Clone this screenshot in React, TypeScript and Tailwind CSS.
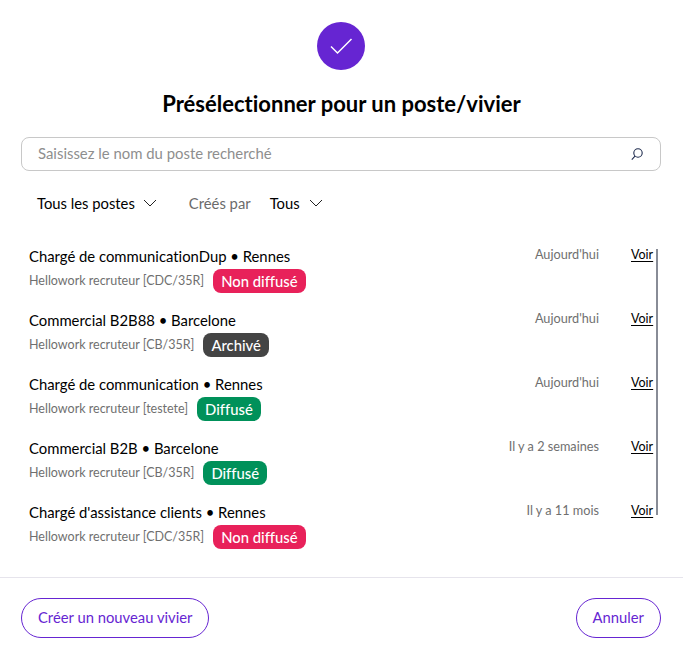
const font = "[font-family:Lato,'Noto_Sans',sans-serif] [font-variant-ligatures:none]";

type Row = { title: string; sub: string; badge: string; color: string; date: string };

const rows: Row[] = [
  { title: "Chargé de communicationDup • Rennes", sub: "Hellowork recruteur [CDC/35R]", badge: "Non diffusé", color: "bg-[#e8215a]", date: "Aujourd'hui" },
  { title: "Commercial B2B88 • Barcelone", sub: "Hellowork recruteur [CB/35R]", badge: "Archivé", color: "bg-[#444444]", date: "Aujourd'hui" },
  { title: "Chargé de communication • Rennes", sub: "Hellowork recruteur [testete]", badge: "Diffusé", color: "bg-[#00915a]", date: "Aujourd'hui" },
  { title: "Commercial B2B • Barcelone", sub: "Hellowork recruteur [CB/35R]", badge: "Diffusé", color: "bg-[#00915a]", date: "Il y a 2 semaines" },
  { title: "Chargé d'assistance clients • Rennes", sub: "Hellowork recruteur [CDC/35R]", badge: "Non diffusé", color: "bg-[#e8215a]", date: "Il y a 11 mois" },
];

function Chevron() {
  return (
    <svg width="14" height="8" viewBox="0 0 14 8" fill="none" stroke="#222" strokeWidth="1">
      <path d="M1 1l6 6 6-6" />
    </svg>
  );
}

export default function App() {
  return (
    <div className={`${font} w-[683px] h-[660px] bg-white flex flex-col text-black overflow-hidden`}>
      <div className="flex justify-center pt-[22px] pr-px">
        <div className="w-12 h-12 rounded-full bg-[#6625d2] flex items-center justify-center">
          <svg width="24" height="18" viewBox="0 0 24 18" fill="none" stroke="white" strokeWidth="1.5">
            <path d="M2 9.5l6.5 6.5L22.5 2" />
          </svg>
        </div>
      </div>
      <h1 className="mt-[20px] text-center text-[22px] leading-[28px] font-bold">Présélectionner pour un poste/vivier</h1>
      <div className="ml-[21px] mr-[22px] mt-[19px] h-[34px] rounded-lg border border-[#c8c8c8] flex items-center justify-between pl-4 pr-[16px]">
        <span className="text-[14.9px] leading-[20px] -mt-[2px] text-[#8e8e8e]">Saisissez le nom du poste recherché</span>
        <svg width="14" height="14" viewBox="0 0 14 14" fill="none" stroke="#1d2a4d" strokeWidth="1.1">
          <circle cx="8" cy="6" r="4.2" />
          <path d="M5 9.2L1.8 12.6" />
        </svg>
      </div>
      <div className="mt-[21px] ml-[37px] flex items-center text-[14.8px] leading-[22px]">
        <span>Tous les postes</span>
        <span className="ml-[8px]"><Chevron /></span>
        <span className="ml-[32px] text-[#6b6b6b]">Créés par</span>
        <span className="ml-[19px]">Tous</span>
        <span className="ml-[9px]"><Chevron /></span>
      </div>
      <div className="relative mt-[32px] ml-[29px] mr-[30px] flex flex-col gap-[14px]">
        {rows.map((r) => (
          <div key={r.title} className="h-[50px] flex justify-between">
            <div className="flex flex-col">
              <div className="text-[14.85px] leading-[20px]">{r.title}</div>
              <div className="mt-[3px] flex items-center gap-[9px]">
                <span className="text-[12.5px] text-[#6f6f6f]">{r.sub}</span>
                <span className={`${r.color} h-6 px-[8px] rounded-lg text-white text-[14.8px] font-medium flex items-center`}>{r.badge}</span>
              </div>
            </div>
            <div className="flex items-start">
              <span className="text-[12.7px] leading-[16px] text-[#6f6f6f]">{r.date}</span>
              <span className="ml-8 w-[22px] pt-px text-[12.5px] leading-[16px] underline underline-offset-2">Voir</span>
            </div>
          </div>
        ))}
        <div className="absolute right-[-5px] top-[3px] w-[2px] h-[266px] bg-[#888c96]" />
      </div>
      <div className="mt-auto h-[83px] border-t border-[#e6e4ec] flex justify-between items-start pt-[20px] pl-[21px] pr-[22px]">
        <button className="h-10 px-4 rounded-full border border-[#6625d2] text-[#6625d2] text-[14.8px] leading-[20px] pb-[2px]">Créer un nouveau vivier</button>
        <button className="h-10 px-4 rounded-full border border-[#6625d2] text-[#6625d2] text-[14.8px] leading-[20px] pb-[2px]">Annuler</button>
      </div>
    </div>
  );
}
